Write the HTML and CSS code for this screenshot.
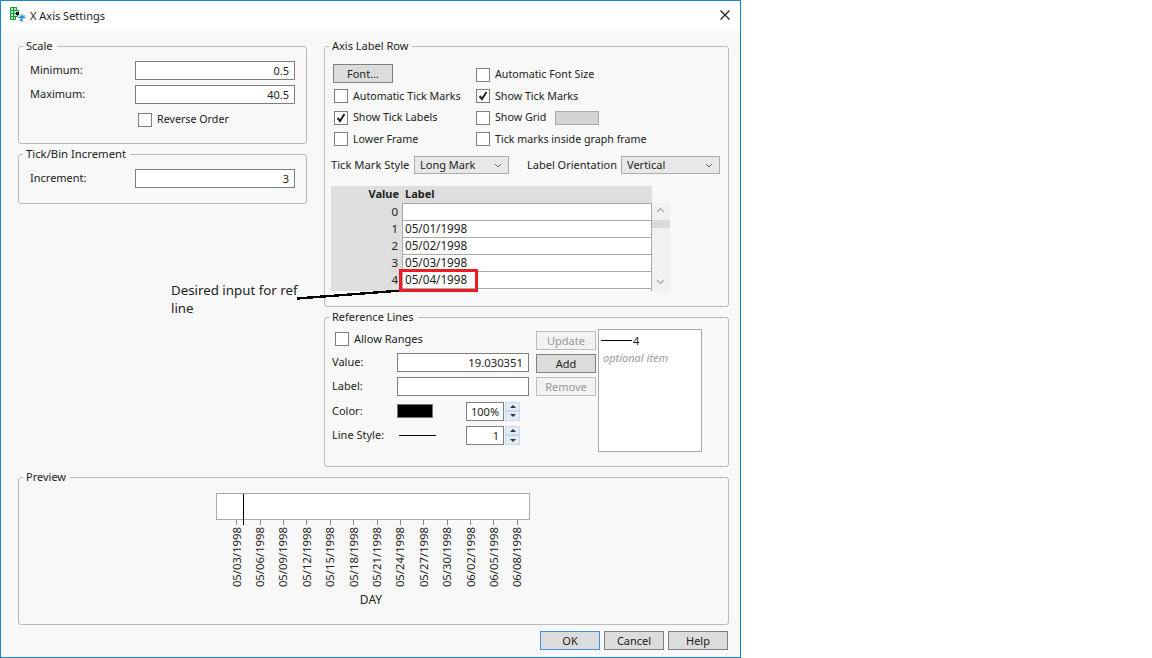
FILE: index.html
```html
<!DOCTYPE html>
<html lang="en">
<head>
<meta charset="utf-8">
<title>X Axis Settings</title>
<link rel="stylesheet" href="styles.css">
</head>
<body>
<div class="window">
  <header class="titlebar">
    <svg class="app-icon" width="16" height="16" viewBox="0 0 16 16">
      <path d="M.5 .5h6v3h2v3h-1v3h-2v3H.5z" fill="#b9e8c2" stroke="#1c9a3a"/>
      <path d="M.5 3.500h6M.5 6.500h7M.5 9.500h6M3.500 1v12" stroke="#1c9a3a" fill="none"/>
      <rect x="6" y="5" width="3" height="3" fill="#111"/>
      <path d="M8 10.500h7.500M12 7v8M9.500 8.500l2.500 2 2.500-2M10 14l2-3.500" stroke="#2a8fe0" stroke-width="1.200" fill="none"/>
    </svg>
    <span class="title">X Axis Settings</span>
    <svg class="close" width="12" height="12" viewBox="0 0 12 12"><path d="M1.500 1.500l9 9M10.500 1.500l-9 9" stroke="#222" stroke-width="1.200" fill="none"/></svg>
  </header>

  <main class="content">
    <div class="columns">
      <div class="col-left">
        <section class="group scale">
          <h2 class="legend">Scale</h2>
          <div class="form-row"><label class="form-label">Minimum:</label><div class="input num wide">0.5</div></div>
          <div class="form-row"><label class="form-label">Maximum:</label><div class="input num wide">40.5</div></div>
          <div class="check reverse"><span class="box"></span>Reverse Order</div>
        </section>
        <section class="group tick">
          <h2 class="legend">Tick/Bin Increment</h2>
          <div class="form-row"><label class="form-label">Increment:</label><div class="input num wide">3</div></div>
        </section>
      </div>

      <div class="col-right">
        <section class="group axis">
          <h2 class="legend">Axis Label Row</h2>
          <div class="axis-grid">
            <div class="cell"><button class="btn font-btn">Font...</button></div>
            <div class="check"><span class="box"></span>Automatic Font Size</div>
            <div class="check"><span class="box"></span>Automatic Tick Marks</div>
            <div class="check"><span class="box on"><svg width="12" height="12" viewBox="0 0 12 12"><path d="M2.500 6l2.500 3 4.500-7" stroke="#222" stroke-width="2" fill="none"/></svg></span>Show Tick Marks</div>
            <div class="check"><span class="box on"><svg width="12" height="12" viewBox="0 0 12 12"><path d="M2.500 6l2.500 3 4.500-7" stroke="#222" stroke-width="2" fill="none"/></svg></span>Show Tick Labels</div>
            <div class="check"><span class="box"></span>Show Grid<span class="swatch-grid"></span></div>
            <div class="check"><span class="box"></span>Lower Frame</div>
            <div class="check"><span class="box"></span>Tick marks inside graph frame</div>
          </div>
          <div class="select-row">
            <span class="select-label">Tick Mark Style</span>
            <div class="select s-mark">Long Mark<svg width="8" height="5" viewBox="0 0 8 5"><path d="M1 1l3 3 3-3" stroke="#666" fill="none"/></svg></div>
            <span class="select-label second">Label Orientation</span>
            <div class="select s-orient">Vertical<svg width="8" height="5" viewBox="0 0 8 5"><path d="M1 1l3 3 3-3" stroke="#666" fill="none"/></svg></div>
          </div>
          <div class="table-wrap">
            <div class="table">
              <div class="thead"><span class="th-value">Value</span><span class="th-label">Label</span></div>
              <div class="tbody">
                <div class="tr"><span class="td-value">0</span><span class="td-label"></span></div>
                <div class="tr"><span class="td-value">1</span><span class="td-label">05/01/1998</span></div>
                <div class="tr"><span class="td-value">2</span><span class="td-label">05/02/1998</span></div>
                <div class="tr"><span class="td-value">3</span><span class="td-label">05/03/1998</span></div>
                <div class="tr"><span class="td-value">4</span><span class="td-label">05/04/1998</span></div>
                <div class="tr"><span class="td-value"></span><span class="td-label"></span></div>
              </div>
            </div>
            <div class="scrollbar">
              <svg class="arrow-up" width="9" height="6" viewBox="0 0 9 6"><path d="M1 5l3.500-3.500L8 5" stroke="#aaa" fill="none" stroke-width="1.200"/></svg>
              <span class="thumb"></span>
              <svg class="arrow-down" width="9" height="6" viewBox="0 0 9 6"><path d="M1 1l3.500 3.500L8 1" stroke="#aaa" fill="none" stroke-width="1.200"/></svg>
            </div>
          </div>
        </section>

        <section class="group reflines">
          <h2 class="legend">Reference Lines</h2>
          <div class="ref-layout">
            <div class="ref-form">
              <div class="check allow"><span class="box"></span>Allow Ranges</div>
              <div class="ref-row"><span class="ref-label">Value:</span><div class="input num ref-input">19.030351</div></div>
              <div class="ref-row"><span class="ref-label">Label:</span><div class="input ref-input"></div></div>
              <div class="ref-row"><span class="ref-label">Color:</span><span class="color-swatch"></span>
                <div class="spin"><div class="input num spin-input">100%</div><div class="spin-btns"><span class="spin-btn"><i class="up"></i></span><span class="spin-btn"><i class="down"></i></span></div></div></div>
              <div class="ref-row"><span class="ref-label">Line Style:</span><span class="line-sample"></span>
                <div class="spin"><div class="input num spin-input">1</div><div class="spin-btns"><span class="spin-btn"><i class="up"></i></span><span class="spin-btn"><i class="down"></i></span></div></div></div>
            </div>
            <div class="ref-buttons">
              <button class="btn ref-btn disabled">Update</button>
              <button class="btn ref-btn">Add</button>
              <button class="btn ref-btn disabled">Remove</button>
            </div>
            <div class="listbox">
              <div class="list-item"><span class="list-line"></span>4</div>
              <div class="list-optional">optional item</div>
            </div>
          </div>
        </section>
      </div>
    </div>

    <section class="group preview">
      <h2 class="legend">Preview</h2>
      <div class="plot-wrap">
        <div class="plot"><span class="plot-ref"></span></div>
        <div class="axis-ticks">
          <div class="t"><span>05/03/1998</span></div>
          <div class="t"><span>05/06/1998</span></div>
          <div class="t"><span>05/09/1998</span></div>
          <div class="t"><span>05/12/1998</span></div>
          <div class="t"><span>05/15/1998</span></div>
          <div class="t"><span>05/18/1998</span></div>
          <div class="t"><span>05/21/1998</span></div>
          <div class="t"><span>05/24/1998</span></div>
          <div class="t"><span>05/27/1998</span></div>
          <div class="t"><span>05/30/1998</span></div>
          <div class="t"><span>06/02/1998</span></div>
          <div class="t"><span>06/05/1998</span></div>
          <div class="t"><span>06/08/1998</span></div>
        </div>
        <div class="axis-title">DAY</div>
      </div>
    </section>

    <footer class="footer">
      <button class="btn foot-btn ok">OK</button>
      <button class="btn foot-btn">Cancel</button>
      <button class="btn foot-btn">Help</button>
    </footer>
  </main>

  <div class="annotation">Desired input for ref<br>line</div>
  <svg class="callout" width="110" height="14" viewBox="0 0 110 14"><path d="M1 11.500L106 3.500" stroke="#000" stroke-width="2.400" fill="none" shape-rendering="crispEdges"/></svg>
  <div class="redbox"></div>
</div>
</body>
</html>
```

FILE: styles.css
```css
* { box-sizing: border-box; }
html, body { margin: 0; padding: 0; background: #fff; }
body {
  font-family: "Noto Sans", "Open Sans", sans-serif;
  font-size: 11px;
  color: #222;
}
.window {
  position: relative;
  width: 741px;
  height: 658px;
  border: 1px solid #1883d7;
  background: #f8f8f8;
  display: flex;
  flex-direction: column;
}
.titlebar {
  height: 30px;
  flex: none;
  background: #fff;
  display: flex;
  align-items: center;
  padding: 0 9px 2px 9px;
}
.app-icon { flex: none; margin-right: 4px; }
.title { font-size: 11px; color: #222; flex: 1; }
.close { flex: none; }

.content { padding: 15px 11px 0 17px; flex: 1; display: flex; flex-direction: column; }
.columns { display: flex; gap: 17px; }
.col-left { width: 289px; display: flex; flex-direction: column; gap: 10px; }
.col-right { width: 405px; display: flex; flex-direction: column; gap: 10px; }

.group {
  position: relative;
  border: 1px solid #b9b9b9;
  border-radius: 3px;
}
.legend {
  position: absolute;
  top: -9px;
  left: 4px;
  margin: 0;
  padding: 0 4px 0 3px;
  background: #f8f8f8;
  font-size: 11px;
  font-weight: 400;
  line-height: 16px;
}
.tick .legend { font-size: 11.300px; }

.input {
  height: 19px;
  border: 1px solid #7f7f7f;
  background: #fff;
  line-height: 17px;
  padding: 0 5px;
  color: #222;
}
.num { text-align: right; }
.wide { width: 160px; }
.form-row { display: flex; align-items: center; height: 19px; margin-bottom: 5px; }
.form-label { width: 105px; flex: none; padding-bottom: 2px; }

.check { display: flex; align-items: center; white-space: nowrap; padding-bottom: 2px; font-size: 10.700px; }
.box {
  width: 14px;
  height: 14px;
  border: 1px solid #7f7f7f;
  background: #fff;
  margin: 2px 5px 0 0;
  flex: none;
  display: flex;
  align-items: center;
  justify-content: center;
}

.scale { height: 98px; padding: 14px 11px 0 11px; }
.reverse { margin: 7px 0 0 108px; }
.tick { height: 50px; padding: 14px 11px 0 11px; }

.axis { height: 261px; padding: 17px 8px 0 6px; }
.axis-grid {
  display: grid;
  grid-template-columns: 143px 1fr;
  grid-auto-rows: 21.5px;
  margin-left: 2px;
}
.axis-grid .check { padding-bottom: 1px; }
.axis-grid .box { margin-top: 1px; }
.axis-grid .check:nth-child(odd) { margin-left: 1px; }
.cell { display: flex; align-items: flex-start; }
.btn {
  font: inherit;
  color: #222;
  height: 19px;
  padding: 0;
  border: 1px solid #7f7f7f;
  background: #dcdcdc;
  border-radius: 0;
}
.font-btn { width: 60px; }
.swatch-grid {
  width: 44px;
  height: 14px;
  margin: 1px 0 0 9px;
  background: #d4d4d4;
  border: 1px solid #aaa;
}
.select-row { display: flex; align-items: center; margin-top: 6px; height: 18px; }
.select-label { white-space: nowrap; padding-bottom: 1px; font-size: 11.200px; }
.select {
  height: 18px;
  border: 1px solid #adadad;
  background: #e8e8e8;
  padding: 0 6px 0 5px;
  display: flex;
  align-items: center;
  justify-content: space-between;
  line-height: 16px;
}
.s-mark { width: 95px; position: absolute; left: 89px; }
.s-orient { width: 99px; position: absolute; left: 296px; }
.select-label.second { position: absolute; left: 202px; font-size: 11px; }

.table-wrap { display: flex; margin-top: 12px; }
.table { width: 321px; }
.thead { height: 17px; background: #dedede; display: flex; font-weight: 700; line-height: 16px; }
.th-value { width: 68px; text-align: right; }
.th-label { padding-left: 6px; }
.tbody { height: 88px; overflow: hidden; background: #dedede; }
.tr { display: flex; height: 17px; }
.td-value { width: 71px; padding-right: 4px; text-align: right; line-height: 17px; font-size: 11.500px; }
.td-label {
  flex: 1;
  height: 18px;
  border: 1px solid #a9a9a9;
  background: #fff;
  padding-left: 2px;
  line-height: 15px;
  font-size: 11.700px;
}
.scrollbar {
  position: relative;
  width: 18px;
  margin: 17px 0 0 0;
  height: 89px;
  background: #f1f1f1;
}
.thumb { position: absolute; top: 17px; left: 0; width: 18px; height: 8px; background: #dadada; }
.arrow-up { position: absolute; top: 4px; left: 4px; }
.arrow-down { position: absolute; top: 76px; left: 4px; }

.reflines { height: 150px; }
.ref-layout { display: flex; padding: 11px 0 0 7px; }
.ref-form { width: 204px; flex: none; }
.allow { margin: 1px 0 5px 3px; font-size: 11px; }
.ref-row { display: flex; align-items: center; height: 19px; margin-bottom: 5.300px; }
.ref-label { width: 65px; flex: none; padding-bottom: 2px; }
.ref-input { width: 132px; font-size: 11.300px; }
.color-swatch { width: 36px; height: 14px; background: #000; border: 1px solid #777; flex: none; }
.line-sample { width: 37px; height: 1px; margin-left: 2px; background: #000; flex: none; }
.line-sample + .spin { margin-left: 30px; }
.color-swatch + .spin { margin-left: 33px; }
.spin { display: flex; }
.spin-input { width: 38px; padding: 0 4px; }
.spin-btns { display: flex; flex-direction: column; width: 15px; height: 19px; margin-left: 1px; }
.spin-btn {
  flex: 1;
  background: #e3ecf6;
  border: 1px solid #c9d9ea;
  display: flex;
  align-items: center;
  justify-content: center;
}
.spin-btn i { width: 0; height: 0; border-left: 3px solid transparent; border-right: 3px solid transparent; }
.spin-btn .up { border-bottom: 3px solid #333; }
.spin-btn .down { border-top: 3px solid #333; }

.ref-buttons { display: flex; flex-direction: column; gap: 4px; width: 60px; flex: none; margin: 2px 2px 0 0; }
.ref-btn { width: 60px; }
.ref-btn.disabled { background: #f2f2f2; border-color: #bdbdbd; color: #999; }
.listbox {
  width: 104px;
  height: 123px;
  border: 1px solid #a9a9a9;
  background: #fff;
  padding: 0 2px;
}
.list-item { display: flex; align-items: center; height: 20px; color: #222; }
.list-line { width: 31px; height: 1px; background: #000; margin-right: 1px; }
.list-optional { font-style: italic; color: #999; padding: 0 2px; line-height: 16px; margin-top: 0; }

.preview { height: 148px; margin-top: 10px; padding: 15px 0 0 197px; }
.plot-wrap { width: 314px; }
.plot {
  position: relative;
  height: 27px;
  border: 1px solid #a9a9a9;
  background: #fff;
}
.plot-ref { position: absolute; left: 26px; top: 0; width: 1px; height: 31px; background: #000; }
.axis-ticks { display: flex; padding-left: 9px; height: 73px; }
.t {
  width: 23.400px;
  flex: none;
  display: flex;
  flex-direction: column;
  align-items: center;
}
.t::before { content: ""; width: 1px; height: 5px; background: #888; flex: none; }
.t span {
  writing-mode: vertical-rl;
  transform: rotate(180deg);
  line-height: 14px;
  margin-top: 2px;
  white-space: nowrap;
  font-size: 11.300px;
}
.axis-title { text-align: center; line-height: 16px; margin-top: -1px; font-size: 12px; padding-right: 4px; }

.footer { display: flex; justify-content: flex-end; gap: 4px; margin: 6px 1px 0 0; }
.foot-btn { width: 60px; }
.foot-btn.ok { border-color: #3e93e0; }

.annotation {
  position: absolute;
  left: 170px;
  top: 280px;
  font-size: 13.300px;
  line-height: 18px;
  color: #222;
  white-space: nowrap;
}
.callout { position: absolute; left: 295px; top: 286px; }
.redbox {
  position: absolute;
  left: 398px;
  top: 268px;
  width: 79px;
  height: 23px;
  border: 3px solid #ed1c24;
}
```
